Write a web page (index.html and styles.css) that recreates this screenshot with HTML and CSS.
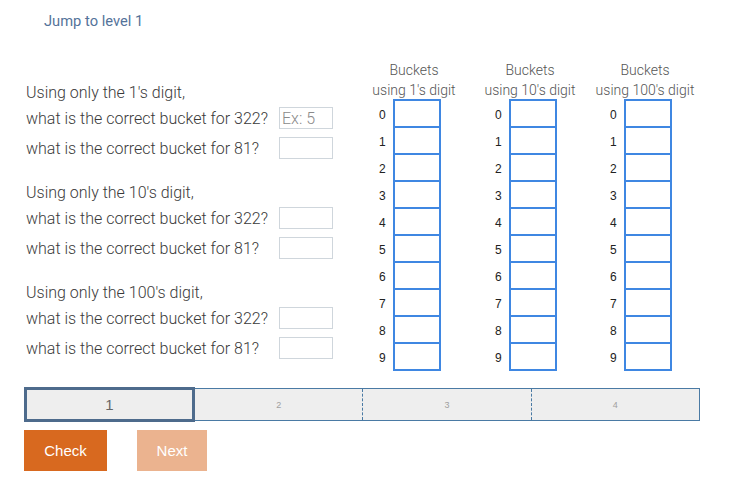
FILE: index.html
```html
<html>
	<head>
		<title>Radix sort buckets</title>
		<meta charset="utf-8" />
		<link rel="stylesheet" href="styles.css">
	</head>
	<body>
		<div class="jump">Jump to level 1</div>
		<div class="main">
			<div class="questions">
				<div class="group">
					<div class="ghead">Using only the 1's digit,</div>
					<div class="qrow"><span class="qlabel">what is the correct bucket for 322?</span><input class="ans" placeholder="Ex: 5"></div>
					<div class="qrow"><span class="qlabel">what is the correct bucket for 81?</span><input class="ans"></div>
				</div>
				<div class="group">
					<div class="ghead">Using only the 10's digit,</div>
					<div class="qrow"><span class="qlabel">what is the correct bucket for 322?</span><input class="ans"></div>
					<div class="qrow"><span class="qlabel">what is the correct bucket for 81?</span><input class="ans"></div>
				</div>
				<div class="group">
					<div class="ghead">Using only the 100's digit,</div>
					<div class="qrow"><span class="qlabel">what is the correct bucket for 322?</span><input class="ans"></div>
					<div class="qrow"><span class="qlabel">what is the correct bucket for 81?</span><input class="ans"></div>
				</div>
			</div>
			<div class="buckets" id="buckets"></div>
		</div>
		<div class="levels">
			<div class="lvl cur">1</div>
			<div class="lvl">2</div>
			<div class="lvl">3</div>
			<div class="lvl">4</div>
		</div>
		<div class="btns">
			<button class="btn check">Check</button>
			<button class="btn next">Next</button>
		</div>
		<script>
		var subs = ["using 1's digit", "using 10's digit", "using 100's digit"];
		var wrap = document.getElementById("buckets");
		var i, j;
		for (i = 0; i < subs.length; i++) {
			var col = document.createElement("div");
			col.className = "bcol";
			var h = document.createElement("div");
			h.className = "bhead";
			h.innerHTML = "Buckets<br>" + subs[i];
			col.appendChild(h);
			for (j = 0; j < 10; j++) {
				var row = document.createElement("div");
				row.className = "brow";
				row.innerHTML = '<span class="bnum">' + j + '</span><span class="box"></span>';
				col.appendChild(row);
			}
			wrap.appendChild(col);
		}
		</script>
	</body>
</html>
```

FILE: styles.css
```css
body {
	margin: 0;
	font-family: Roboto, "Liberation Sans", sans-serif;
	background: #fff;
}
.jump {
	padding: 12px 0 0 44px;
	height: 20px;
	font-size: 14.7px;
	line-height: 18px;
	color: #54739a;
}
.main {
	display: flex;
	padding-top: 28px;
}
.questions {
	padding: 23px 0 0 26px;
	width: 324px;
}
.group {
	margin-bottom: 20px;
}
.group:last-child {
	margin-bottom: 0;
}
.ghead {
	font-size: 16px;
	line-height: 20px;
	color: #3a3a3a;
	font-weight: 300;
}
.qrow {
	display: flex;
	align-items: center;
	height: 30px;
}
.qlabel {
	width: 253px;
	font-size: 16px;
	color: #3a3a3a;
	font-weight: 300;
}
.ans {
	width: 54px;
	height: 22px;
	box-sizing: border-box;
	border: 1px solid #cfd6dc;
	padding: 0 2px;
	font-family: Roboto, sans-serif;
	font-size: 16px;
	font-weight: 300;
	outline: 0;
}
.ans::placeholder {
	color: #8a8a8a;
}
.buckets {
	display: flex;
}
.bcol {
	width: 116px;
}
.bcol:last-child {
	margin-left: -1px;
}
.bhead {
	padding-left: 12px;
	text-align: center;
	font-size: 14px;
	line-height: 20px;
	color: #555;
	font-weight: 300;
	margin-bottom: 1px;
	white-space: nowrap;
}
.brow {
	display: flex;
	align-items: center;
	height: 27px;
}
.bnum {
	width: 43px;
	box-sizing: border-box;
	padding-left: 29px;
	font-family: "Liberation Sans", Arial, sans-serif;
	font-size: 12px;
	color: #222;
}
.box {
	width: 48px;
	height: 29px;
	box-sizing: border-box;
	border: 2px solid #3f87e2;
	margin-top: -2px;
}
.brow:first-of-type .box {
	margin-top: 0;
}
.levels {
	display: flex;
	margin: 17px 30px 0 24px;
	height: 31px;
	border: 1px solid #4a7aa4;
	border-left: 0;
	background: #eee;
}
.lvl {
	flex: 1;
	display: flex;
	align-items: center;
	justify-content: center;
	font-family: "Liberation Sans", Arial, sans-serif;
	font-size: 9px;
	color: #a0a0a0;
	border-left: 1px dashed #4a7aa4;
}
.lvl.cur {
	flex: 0 0 171px;
	box-sizing: border-box;
	margin: -2px 0 -2px 0;
	border: 3px solid #4e6b8c;
	font-size: 15px;
	color: #666;
}
.lvl.cur + .lvl {
	border-left: 0;
}
.btns {
	display: flex;
	gap: 30px;
	padding: 9px 0 0 24px;
}
.btn {
	height: 41px;
	border: 0;
	color: #fff;
	font-family: "Liberation Sans", Arial, sans-serif;
	font-size: 15px;
	outline: 0;
}
.check {
	width: 83px;
	background: #d8691f;
}
.next {
	width: 70px;
	background: #ebb38f;
}
```
